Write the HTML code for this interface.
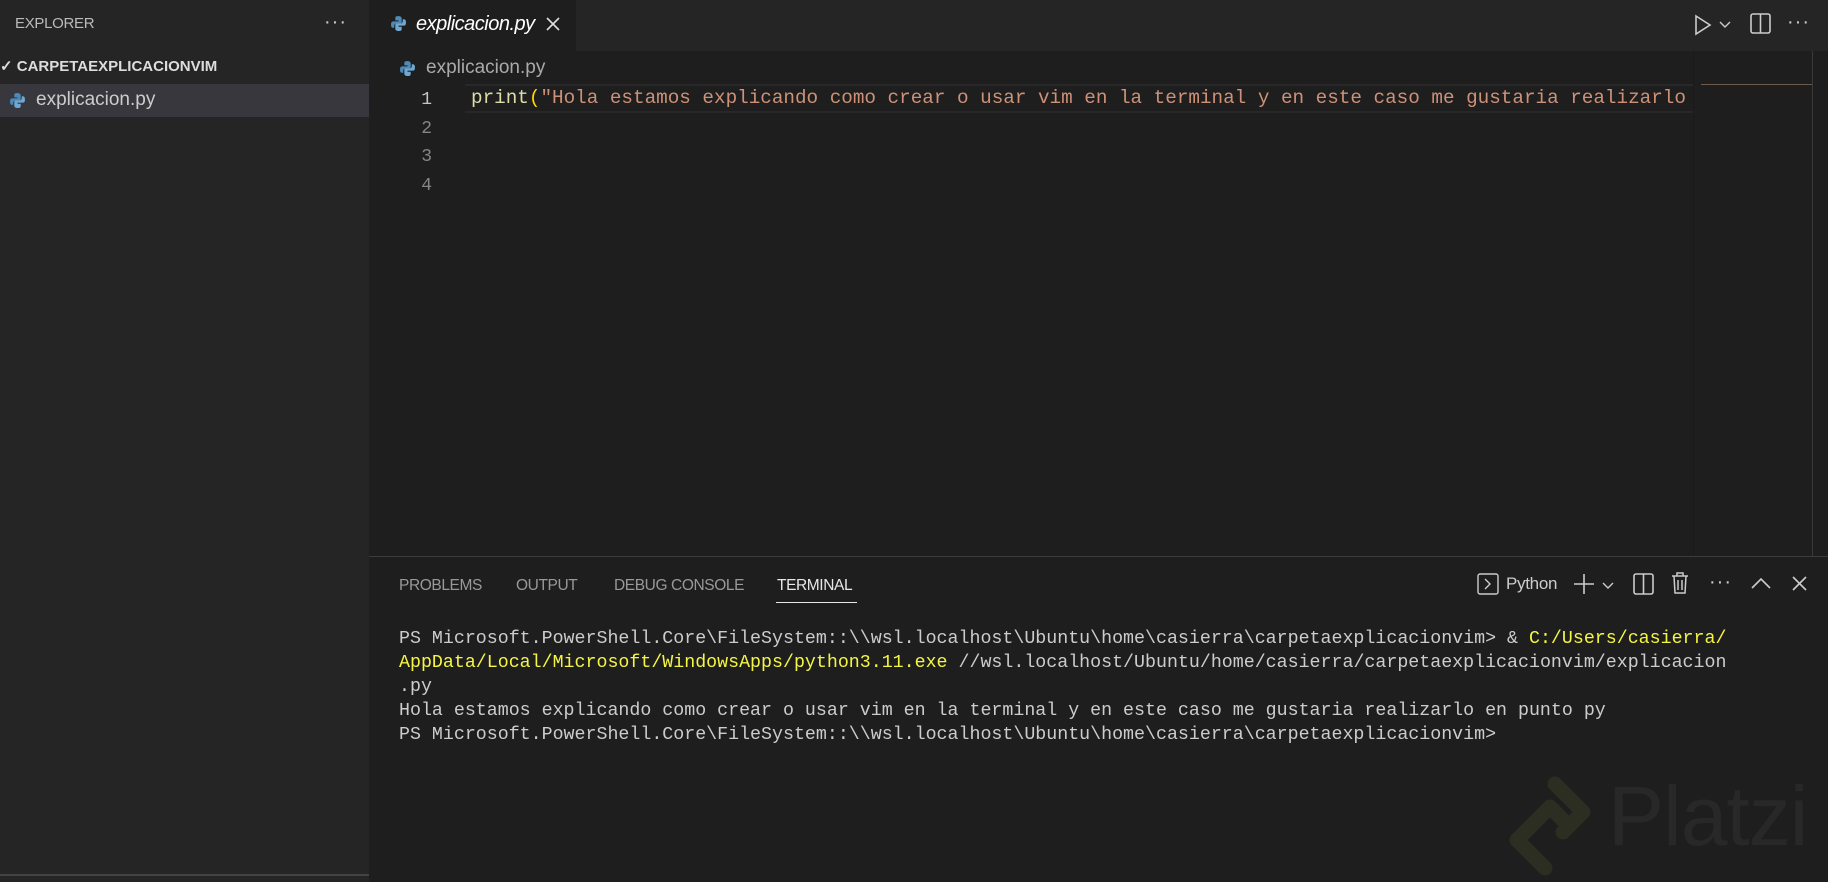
<!DOCTYPE html>
<html><head><meta charset="utf-8"><style>
*{margin:0;padding:0;box-sizing:border-box}
body{width:1828px;height:882px;background:#1e1e1e;position:relative;overflow:hidden;font-family:"Liberation Sans",sans-serif;color:#ccc}
.abs{position:absolute}
.mono{font-family:"Liberation Mono",monospace;white-space:pre}
.sb{left:0;top:0;width:369px;height:882px;background:#252526}
.tabbar{left:369px;top:0;width:1459px;height:51px;background:#252526}
.tab{left:369px;top:0;width:207px;height:51px;background:#1e1e1e}
.pt{font-size:15.5px;letter-spacing:-0.4px;color:#999;top:577px}
</style></head><body>
<div class="abs sb"></div>
<div class="abs" style="left:15px;top:15px;font-size:15px;color:#bbb;letter-spacing:-0.3px">EXPLORER</div>
<div class="abs" style="left:324px;top:11px;font-size:20px;color:#ccc;letter-spacing:1px">···</div>
<div class="abs" style="left:0;top:57px;font-size:15px;color:#ddd;font-weight:bold">✓ CARPETAEXPLICACIONVIM</div>
<div class="abs" style="left:0;top:84px;width:369px;height:33px;background:#37373d"></div>
<svg class="abs" style="left:9px;top:92px" width="17" height="17" viewBox="0 0 16 16"><path d="M8 1c-3 0-3 1-3 2v2h3v1H3C1 6 1 8 1 9s0 3 2 3h1v-2c0-1 1-2 2-2h4c1 0 1-1 1-1V3c0-1-1-2-3-2z" fill="#4d8ab8"/><path d="M8 15c3 0 3-1 3-2v-2H8v-1h5c2 0 2-2 2-3s0-3-2-3h-1v2c0 1-1 2-2 2H6c-1 0-1 1-1 1v4c0 1 1 2 3 2z" fill="#6fa8d0"/></svg>
<div class="abs" style="left:36px;top:89px;font-size:19px;color:#ccc">explicacion.py</div>
<div class="abs" style="left:0;top:874px;width:369px;height:2px;background:#444"></div>

<div class="abs tabbar"></div>
<div class="abs tab"></div>
<svg class="abs" style="left:390px;top:15px" width="17" height="17" viewBox="0 0 16 16"><path d="M8 1c-3 0-3 1-3 2v2h3v1H3C1 6 1 8 1 9s0 3 2 3h1v-2c0-1 1-2 2-2h4c1 0 1-1 1-1V3c0-1-1-2-3-2z" fill="#4d8ab8"/><path d="M8 15c3 0 3-1 3-2v-2H8v-1h5c2 0 2-2 2-3s0-3-2-3h-1v2c0 1-1 2-2 2H6c-1 0-1 1-1 1v4c0 1 1 2 3 2z" fill="#6fa8d0"/></svg>
<div class="abs" style="left:416px;top:13px;font-size:20px;font-style:italic;color:#fff;letter-spacing:-0.5px">explicacion.py</div>
<svg class="abs" style="left:545px;top:16px" width="16" height="16" viewBox="0 0 16 16"><path d="M2 2L14 14M14 2L2 14" stroke="#ddd" stroke-width="1.6"/></svg>
<svg class="abs" style="left:1693px;top:13px" width="20" height="24" viewBox="0 0 20 24"><path d="M3 3L17 12L3 21Z" fill="none" stroke="#ccc" stroke-width="1.6"/></svg>
<svg class="abs" style="left:1719px;top:19px" width="12" height="10"><path d="M1 3L6 8L11 3" fill="none" stroke="#ccc" stroke-width="1.4"/></svg>
<svg class="abs" style="left:1750px;top:13px" width="22" height="22"><rect x="1" y="1" width="19" height="19" rx="2" fill="none" stroke="#ccc" stroke-width="1.6"/><path d="M10.5 1V20" stroke="#ccc" stroke-width="1.6"/></svg>
<div class="abs" style="left:1787px;top:11px;font-size:20px;color:#ccc;letter-spacing:1px">···</div>

<svg class="abs" style="left:399px;top:60px" width="17" height="17" viewBox="0 0 16 16"><path d="M8 1c-3 0-3 1-3 2v2h3v1H3C1 6 1 8 1 9s0 3 2 3h1v-2c0-1 1-2 2-2h4c1 0 1-1 1-1V3c0-1-1-2-3-2z" fill="#4d8ab8"/><path d="M8 15c3 0 3-1 3-2v-2H8v-1h5c2 0 2-2 2-3s0-3-2-3h-1v2c0 1-1 2-2 2H6c-1 0-1 1-1 1v4c0 1 1 2 3 2z" fill="#6fa8d0"/></svg>
<div class="abs" style="left:426px;top:57px;font-size:19px;color:#aaa">explicacion.py</div>

<div class="abs" style="left:465px;top:84px;width:1228px;height:29px;border-top:2px solid #282828;border-bottom:2px solid #282828"></div>
<div class="abs mono" style="left:412px;top:86px;font-size:18px;line-height:28.5px;color:#858585;text-align:right;width:20px"><span style="color:#c6c6c6">1</span>
2
3
4</div>
<div class="abs mono" style="left:471px;top:86px;font-size:19.3px;line-height:25px;color:#ce9178"><span style="color:#dcdcaa">print</span><span style="color:#ffd700">(</span>"Hola estamos explicando como crear o usar vim en la terminal y en este caso me gustaria realizarlo</div>
<div class="abs" style="left:1693px;top:51px;width:120px;height:506px;background:#1e1e1e;border-left:1px solid #1a1a1a"></div>
<div class="abs" style="left:1701px;top:84px;width:112px;height:1px;background:#6e5a4a"></div>
<div class="abs" style="left:1812px;top:51px;width:1px;height:506px;background:#3a3a3a"></div>

<div class="abs" style="left:369px;top:556px;width:1459px;height:1px;background:#3c3c3c"></div>
<div class="abs pt" style="left:399px">PROBLEMS</div>
<div class="abs pt" style="left:516px">OUTPUT</div>
<div class="abs pt" style="left:614px">DEBUG CONSOLE</div>
<div class="abs pt" style="left:777px;color:#e7e7e7">TERMINAL</div>
<div class="abs" style="left:776px;top:602px;width:81px;height:1px;background:#e7e7e7"></div>

<svg class="abs" style="left:1477px;top:573px" width="22" height="22"><rect x="1" y="1" width="20" height="20" rx="2" fill="none" stroke="#ccc" stroke-width="1.4"/><path d="M8 6L13 11L8 16" fill="none" stroke="#ccc" stroke-width="1.4"/></svg>
<div class="abs" style="left:1506px;top:574px;font-size:17px;color:#ccc;letter-spacing:-0.3px">Python</div>
<svg class="abs" style="left:1573px;top:573px" width="22" height="22"><path d="M11 1V21M1 11H21" stroke="#ccc" stroke-width="1.6"/></svg>
<svg class="abs" style="left:1602px;top:580px" width="12" height="10"><path d="M1 3L6 8L11 3" fill="none" stroke="#ccc" stroke-width="1.4"/></svg>
<svg class="abs" style="left:1633px;top:573px" width="22" height="22"><rect x="1" y="1" width="19" height="20" rx="2" fill="none" stroke="#ccc" stroke-width="1.6"/><path d="M10.5 1V21" stroke="#ccc" stroke-width="1.6"/></svg>
<svg class="abs" style="left:1671px;top:572px" width="18" height="22"><path d="M1 4H17M6 4V1H12V4M3 4L4 21H14L15 4M7 8V18M11 8V18" fill="none" stroke="#ccc" stroke-width="1.5"/></svg>
<div class="abs" style="left:1709px;top:571px;font-size:20px;color:#ccc;letter-spacing:1px">···</div>
<svg class="abs" style="left:1751px;top:577px" width="20" height="12"><path d="M1 11L10 2L19 11" fill="none" stroke="#ccc" stroke-width="1.6"/></svg>
<svg class="abs" style="left:1792px;top:576px" width="15" height="15"><path d="M1 1L14 14M14 1L1 14" stroke="#ccc" stroke-width="1.6"/></svg>

<div class="abs mono" style="left:399px;top:627px;font-size:18.3px;line-height:24px;color:#cccccc">PS Microsoft.PowerShell.Core\FileSystem::\\wsl.localhost\Ubuntu\home\casierra\carpetaexplicacionvim> &amp; <span style="color:#f5f543">C:/Users/casierra/</span>
<span style="color:#f5f543">AppData/Local/Microsoft/WindowsApps/python3.11.exe</span> //wsl.localhost/Ubuntu/home/casierra/carpetaexplicacionvim/explicacion
.py
Hola estamos explicando como crear o usar vim en la terminal y en este caso me gustaria realizarlo en punto py
PS Microsoft.PowerShell.Core\FileSystem::\\wsl.localhost\Ubuntu\home\casierra\carpetaexplicacionvim></div>

<svg class="abs" style="left:1505px;top:772px" width="90" height="110" viewBox="0 0 90 110"><path d="M50 12L78 40L58 60M40 96L12 68L45 35L60 50" fill="none" stroke="#2c2e22" stroke-width="15" stroke-linejoin="round" stroke-linecap="round"/></svg>
<div class="abs" style="left:1608px;top:768px;font-size:84px;color:#282828;letter-spacing:-1px">Platzi</div>
</body></html>
